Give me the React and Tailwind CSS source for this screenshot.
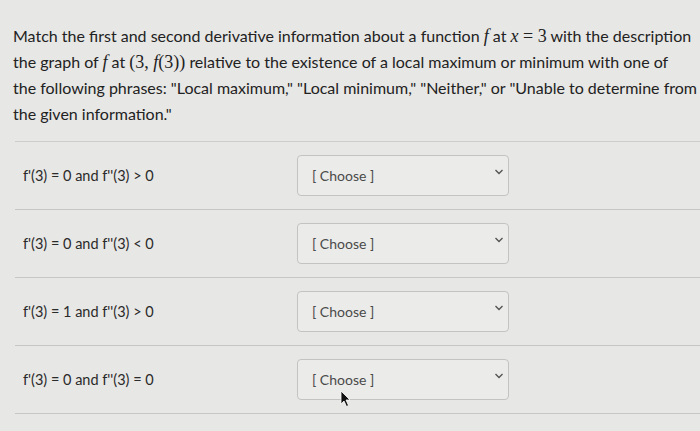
const rows = [
    { id: 1, left: "f'(3) = 0 and f''(3) > 0" },
    { id: 2, left: "f'(3) = 0 and f''(3) < 0" },
    { id: 3, left: "f'(3) = 1 and f''(3) > 0" },
    { id: 4, left: "f'(3) = 0 and f''(3) = 0" },
]

function Math({ children }) {
    return <span className="font-['Liberation_Serif',serif] text-[18px] leading-[20px]">{children}</span>
}

function ChooseBox({ cursor }) {
    return (
        <div className="relative w-[212px] h-[41px] rounded-[4px] border border-[#c3c3c1] bg-[#ebebe9] flex items-center justify-between pl-[14px] pr-[3px]">
            <span className="text-[14px] text-[#4a4a4a]">[ Choose ]</span>
            <svg width="12" height="12" viewBox="0 0 12 12" className="mb-[8px]">
                <path d="M2.5 4 L6 7.5 L9.5 4" fill="none" stroke="#555" strokeWidth="1.4" />
            </svg>
            {cursor && (
                <svg width="12" height="18" viewBox="0 0 12 18" className="absolute left-[42px] top-[30px]">
                    <path d="M1 1 L1 14 L4 11 L6.5 16.5 L8.5 15.5 L6 10 L10 10 Z" fill="#111" stroke="#fff" strokeWidth="0.8" />
                </svg>
            )}
        </div>
    )
}

export default function App() {
    return (
        <div className="w-[700px] h-[431px] overflow-hidden bg-[#e7e7e5] font-['Lato','Noto_Sans',sans-serif] text-[#222]">
            <div className="pl-[13px] pt-[23px]">
                <p className="text-[16px] leading-[26px] whitespace-nowrap">
                    Match the first and second derivative information about a function <Math><i>f</i></Math> at <Math><i>x</i> = 3</Math> with the description
                    <br />
                    the graph of <Math><i>f</i></Math> at <Math>(3, <i>f</i>(3))</Math> relative to the existence of a local maximum or minimum with one of
                    <br />
                    the following phrases: "Local maximum," "Local minimum," "Neither," or "Unable to determine from
                    <br />
                    the given information."
                </p>
            </div>
            <div className="mt-[14px] ml-[15px] border-t border-[#cdcdcb]">
                {rows.map((row, i) => (
                    <div key={row.id} className="h-[68px] flex items-center border-b border-[#c6c6c4]">
                        <div className="w-[282px] pl-[8px] text-[14.5px] text-[#2a2a2a]">{row.left}</div>
                        <ChooseBox cursor={i === 3} />
                    </div>
                ))}
            </div>
        </div>
    )
}
